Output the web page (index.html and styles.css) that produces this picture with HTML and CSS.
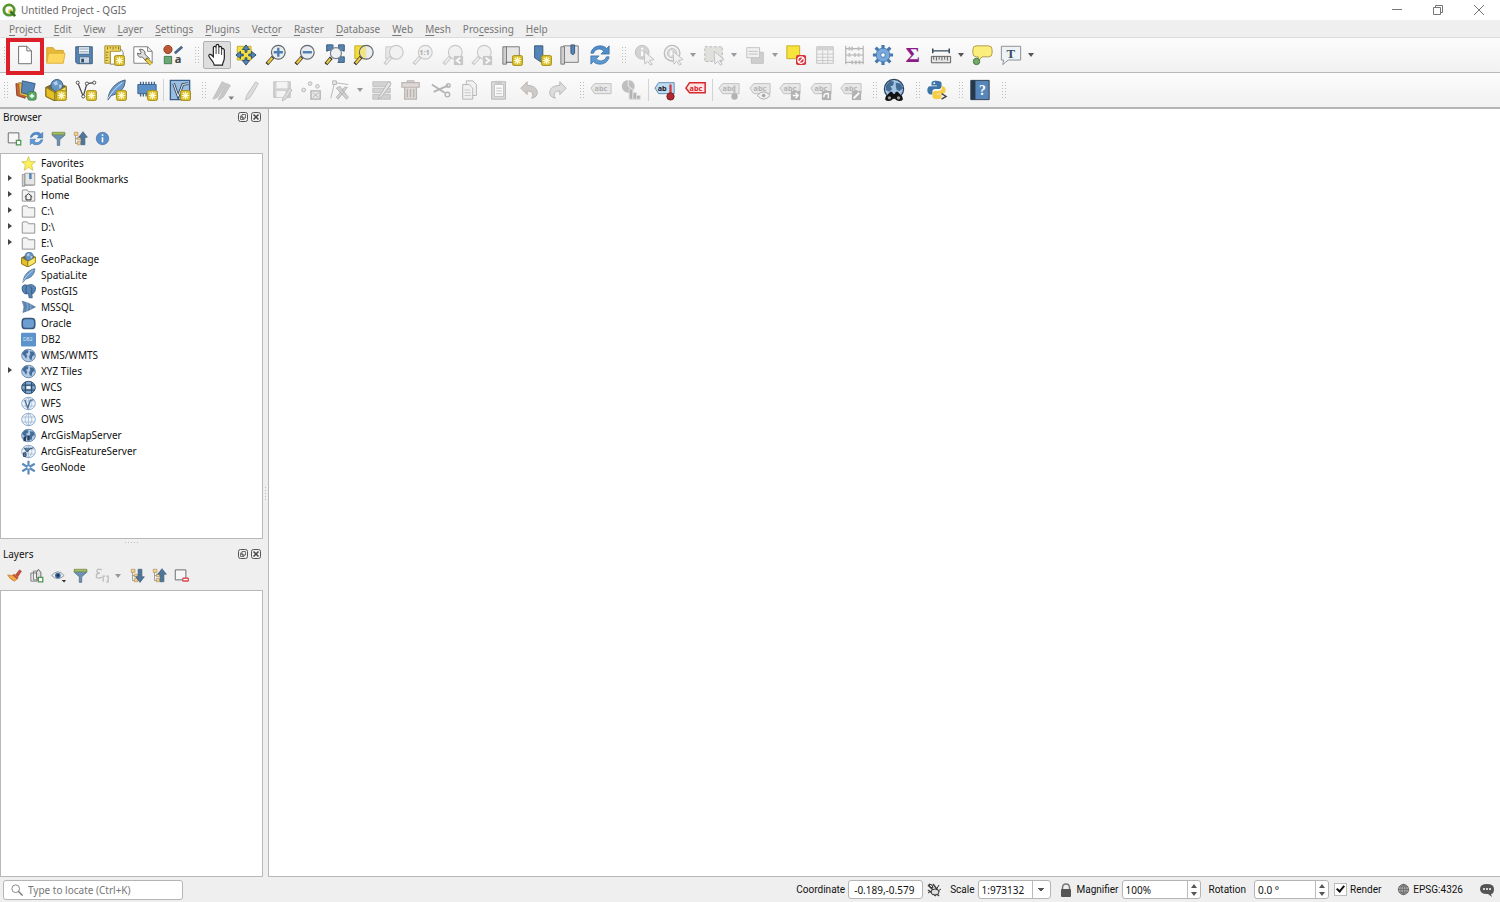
FILE: index.html
```html
<!doctype html>
<html lang="en">
<head>
<meta charset="utf-8">
<title>Untitled Project - QGIS</title>
<link rel="stylesheet" href="styles.css">
</head>

<body>
<!-- shared icons -->
<svg class="sprite" aria-hidden="true">
	<symbol id="star" viewBox="0 0 24 24"><rect x="12.500" y="12.500" width="11" height="11" rx="2" fill="#d9bd2b" stroke="#a58c1b"/><path d="M18 14v8M14 18h8M15 15l6 6M21 15l-6 6" stroke="#fffbd0" stroke-width="1.300"/></symbol>
	<symbol id="lens" viewBox="0 0 24 24"><path d="M2 22l7-8" stroke="#333" stroke-width="4"/><path d="M3 21l5-6" stroke="#f2c93a" stroke-width="2.400"/><circle cx="14.500" cy="9" r="7.500" fill="#e3eaf0" fill-opacity=".8" stroke="#63676b" stroke-width="1.300"/></symbol>
	<symbol id="glens" viewBox="0 0 24 24"><path d="M2 22l7-8" stroke="#aaa" stroke-width="4"/><path d="M3 21l5-6" stroke="#eee" stroke-width="2"/><circle cx="14.500" cy="9" r="7.500" fill="#eee" stroke="#aaa" stroke-width="1.300"/></symbol>
	<symbol id="globe" viewBox="0 0 24 24"><ellipse cx="12" cy="12" rx="11" ry="10" fill="#b3cbe5" stroke="#55799f" stroke-width="1.300"/><path d="M3 7l4-4 5 1-1 4-3 1 2 4-2 4-3-5-3-2zM14 5l6 1 2 5-4 2-1 6-3-1-1-5 2-3z" fill="#436d98"/></symbol>
	<symbol id="grid" viewBox="0 0 24 24"><ellipse cx="12" cy="12" rx="11" ry="10" fill="#eef4fb" stroke="#7e9fc4" stroke-width="1.300"/><path d="M2 8h20M2 16h20M12 2v20M12 2c-7 5-7 15 0 20M12 2c7 5 7 15 0 20" fill="none" stroke="#8eabca"/></symbol>
	<symbol id="refresh" viewBox="0 0 24 24"><path d="M2 10c1-5 5-8 10-8 3 0 6 1 7 3l3-3v9h-9l3-3c-3-4-9-3-11 2z" fill="#4f8cc9" stroke="#386da6" stroke-width=".8"/><path d="M22 14c-1 5-5 8-10 8-3 0-6-1-7-3l-3 3v-9h9l-3 3c3 4 9 3 11-2z" fill="#5d98d1" stroke="#386da6" stroke-width=".8"/></symbol>
	<symbol id="box" viewBox="0 0 24 24"><path d="M1 9l11-5 11 4v9l-12 7L1 19z" fill="#f6dc3d" stroke="#77651b"/><path d="M1 9l10 5 12-6-11-5z" fill="#776a38"/><circle cx="13" cy="7" r="6.500" fill="#6595c5" stroke="#345b83"/><path d="M9 4l4-2 1 4-3 1zM15 6l4 1-3 4z" fill="#b7d0e8"/><path d="M1 9l10 6v9L1 19z" fill="#e5bf23" stroke="#77651b"/><path d="M11 15l12-7v9l-12 7z" fill="#fae765" stroke="#77651b"/></symbol>
	<symbol id="feather" viewBox="0 0 24 24"><path d="M3 23C4 13 10 4 22 1c0 8-4 14-15 17z" fill="#6a9bd0" stroke="#3b5875"/><path d="M2 23C7 15 12 9 19 4" fill="none" stroke="#dbe9f7"/></symbol>
	<symbol id="bookm" viewBox="0 0 24 24"><path d="M6 2h16v19H6z" fill="#e6e6e6" stroke="#777"/><path d="M2 4h4v19H2zM6 21h14" fill="#cfcfcf" stroke="#777"/></symbol>
	<symbol id="folder" viewBox="0 0 24 24"><path d="M2 5l1-2h7l2 3h10v15H2z" fill="#f3f3f3" stroke="#888" stroke-width="1.400"/></symbol>
	<symbol id="filter" viewBox="0 0 24 24"><path d="M2 3h20v4l-8 7v9h-4v-9L2 7z" fill="#6d91b4" stroke="#496884"/><path d="M2 2h20v4H2z" fill="#a8bd60" stroke="#71863b"/></symbol>
	<symbol id="treeup" viewBox="0 0 24 24"><path d="M4 4v16M4 12h6M4 20h6" fill="none" stroke="#777"/><path d="M2 2h6v5H2zM7 10h5v4H7zM7 17h5v5H7z" fill="#efd29a" stroke="#b48b42"/><path d="M16 1l7 9h-4v12h-6V10H9z" fill="#4f7599" stroke="#365775"/></symbol>
	<symbol id="treedown" viewBox="0 0 24 24"><path d="M4 4v16M4 12h6M4 20h6" fill="none" stroke="#777"/><path d="M2 2h6v5H2zM7 10h5v4H7zM7 17h5v5H7z" fill="#efd29a" stroke="#b48b42"/><path d="M16 23l7-9h-4V2h-6v12H9z" fill="#4f7599" stroke="#365775"/></symbol>
	<symbol id="tag" viewBox="0 0 24 24"><path d="M1 10l4-5h18v11H5z" fill="#dedede" stroke="#999"/><text x="5" y="13.500" class="ico-text" fill="#888">abc</text></symbol>
	<symbol id="float" viewBox="0 0 12 12"><rect x="1.500" y="1.500" width="9" height="9" rx="2" fill="none" stroke="#555"/><path d="M5 3.500h3.500V7H5zM3.500 5H5v2h2v1.500H3.500z" fill="none" stroke="#555" stroke-width=".8"/></symbol>
	<symbol id="shut" viewBox="0 0 12 12"><rect x="1.500" y="1.500" width="9" height="9" rx="2" fill="none" stroke="#555"/><path d="M3.500 3.500l5 5M8.500 3.500l-5 5" stroke="#444" stroke-width="1.500"/></symbol>
	<symbol id="cursor" viewBox="0 0 24 24"><path d="M12 8l11 9-5 1 3 4-2 1-3-4-3 3z" fill="#eee" stroke="#999"/></symbol>
</svg>

<header class="titlebar">
	<svg class="logo" viewBox="0 0 16 16"><circle cx="7.500" cy="7.500" r="5.500" fill="none" stroke="#589632" stroke-width="3"/><path d="M8 8l6 6" stroke="#39751e" stroke-width="3"/><path d="M7 7h4l-4 4z" fill="#e8c728"/></svg>
	<h1>Untitled Project - QGIS</h1>
	<div class="win_btns">
		<button aria-label="Minimize"><svg viewBox="0 0 12 12"><path d="M1 5.500h10" stroke="#777"/></svg></button>
		<button aria-label="Restore"><svg viewBox="0 0 12 12"><path d="M1.500 3.500h7v7h-7zM3.500 3.500v-2h7v7h-2" fill="none" stroke="#777"/></svg></button>
		<button aria-label="Close"><svg viewBox="0 0 12 12"><path d="M1 1l10 10M11 1L1 11" stroke="#777"/></svg></button>
	</div>
</header>

<nav class="menubar">
	<button><u>P</u>roject</button>
	<button><u>E</u>dit</button>
	<button><u>V</u>iew</button>
	<button><u>L</u>ayer</button>
	<button><u>S</u>ettings</button>
	<button><u>P</u>lugins</button>
	<button>Vect<u>o</u>r</button>
	<button><u>R</u>aster</button>
	<button><u>D</u>atabase</button>
	<button><u>W</u>eb</button>
	<button><u>M</u>esh</button>
	<button>Pro<u>c</u>essing</button>
	<button><u>H</u>elp</button>
</nav>

<div class="toolrow">
	<i class="grip first"></i>
	<div class="tools project">
		<button class="tool marked" aria-label="New Project"><svg viewBox="0 0 24 24"><path d="M5 2.500h9l5 5v14H5z" fill="#fff" stroke="#666"/><path d="M14 2.500v5h5" fill="none" stroke="#666"/></svg></button>
		<button class="tool" aria-label="Open"><svg viewBox="0 0 24 24"><path d="M3 20V4h7l2 3h9v3" fill="#e9b936" stroke="#cf9e28"/><path d="M3 21l2-11h18l-2 11z" fill="#fdd75c" stroke="#dcae35"/></svg></button>
		<button class="tool" aria-label="Save"><svg viewBox="0 0 24 24"><path d="M3 3h18v18.500H5L3 20z" fill="#5485b7" stroke="#345579"/><path d="M6 3h12v8H6z" fill="#f3f5f7" stroke="#345579" stroke-width=".7"/><path d="M7 5.500h10M7 8.500h10" stroke="#7d99b5"/><path d="M7 14h11v7H7z" fill="#cfd7e0" stroke="#345579" stroke-width=".7"/><path d="M9 16h3v4H9z" fill="#2f4e70"/></svg></button>
		<button class="tool" aria-label="New Print Layout"><svg viewBox="0 0 24 24"><path d="M8 6h12l2 3v13H8z" fill="#fff" stroke="#777"/><path d="M2 2h17v6H8v13H2z" fill="#efd55c" stroke="#a58c35"/><path d="M5 3v3M8 3v2M11 3v3M14 3v2M17 3v3M3 9h3M3 12h2M3 15h3M3 18h2" stroke="#7e6c28"/><use href="#star"/></svg></button>
		<button class="tool" aria-label="Layout Manager"><svg viewBox="0 0 24 24"><path d="M2 3h15l5 5v13H2z" fill="#fff" stroke="#777"/><path d="M17 3v5h5" fill="none" stroke="#777"/><path d="M8 6l2 3-1 2-3-1c0 4 3 5 5 4l5 5 3-3-5-5c1-3-2-6-6-5z" fill="#ddd" stroke="#555"/><path d="M15 16l6 6" stroke="#8c7720" stroke-width="4"/><path d="M16 17l5 5" stroke="#f0d243" stroke-width="2.500"/></svg></button>
		<button class="tool" aria-label="Style Manager"><svg viewBox="0 0 24 24"><circle cx="6.500" cy="6" r="4.500" fill="#bb5936" stroke="#8f3b20"/><path d="M14 10l8-7" stroke="#46678a" stroke-width="3"/><path d="M2.500 13.500h8v8h-8z" fill="#69a875" stroke="#3b7548"/><text x="14" y="21" class="ico-a">a</text></svg></button>
	</div>
	<i class="grip"></i>
	<div class="tools navigate">
		<button class="tool active" aria-label="Pan Map"><svg viewBox="0 0 24 24"><path d="M9 23c-1-5-5-7-6-10 0-2 2-2 3-1l2 2V4c0-2 3-2 3 0V2c0-2 3-2 3 0v2c0-2 3-2 3 0v2c1-2 3-1 3 1v8c0 4-2 5-2 8z" fill="#fff" stroke="#222" stroke-width="1.300"/><path d="M11 4v7M14 4v7M17 6v6" stroke="#333"/></svg></button>
		<button class="tool" aria-label="Pan to Selection"><svg viewBox="0 0 24 24"><path d="M2.500 2.500h15v15h-15z" fill="#f5e03c" stroke="#c0a927"/><path d="M12 1l4 5h-3v3h-2V6H8zM12 23l-4-5h3v-3h2v3h3zM1 12l5-4v3h3v2H6v3zM23 12l-5-4v3h-3v2h3v3z" fill="#5584b5" stroke="#294d72"/></svg></button>
		<button class="tool" aria-label="Zoom In"><svg viewBox="0 0 24 24"><use href="#lens"/><path d="M14.500 4v10M9.500 9h10" stroke="#4d7eaf" stroke-width="2.600"/></svg></button>
		<button class="tool" aria-label="Zoom Out"><svg viewBox="0 0 24 24"><use href="#lens"/><path d="M9.500 9h10" stroke="#4d7eaf" stroke-width="2.600"/></svg></button>
		<button class="tool" aria-label="Zoom Full"><svg viewBox="0 0 24 24"><path d="M3 1h6v5l-2-1-2 2-2 1zM22 1h-6v5l2-1 2 2 2 1zM22 20h-7l2-2-2-3 3-2 2 2 2-1z" fill="#5683b0" stroke="#385d82"/><path d="M3 1h7v6H3zM16 1h6v6h-6zM16 14h6v6h-6z" fill="#5683b0" stroke="#385d82" stroke-width=".7"/><path d="M2 22l6-7" stroke="#333" stroke-width="4"/><path d="M3 21l4-5" stroke="#f2c93a" stroke-width="2.400"/><circle cx="13" cy="10" r="6" fill="#eef1f4" stroke="#7c8186" stroke-width="1.300"/></svg></button>
		<button class="tool" aria-label="Zoom to Selection"><svg viewBox="0 0 24 24"><path d="M2 2h12v14H2z" fill="#f3dd35" stroke="#c4a928"/><use href="#lens"/><path d="M14 3v12c-8-1-8-11 0-12z" fill="#f2e57b"/></svg></button>
		<button class="tool" disabled aria-label="Zoom to Layer"><svg viewBox="0 0 24 24"><path d="M3 3h11v13H3z" fill="#ddd" stroke="#aaa"/><use href="#glens"/></svg></button>
		<button class="tool" disabled aria-label="Zoom to Native Resolution"><svg viewBox="0 0 24 24"><use href="#glens"/><text x="8" y="12.500" class="ico-one">1:1</text></svg></button>
		<button class="tool" disabled aria-label="Zoom Last"><svg viewBox="0 0 24 24"><use href="#glens"/><path d="M13 13h10v10H13z" fill="#aaa"/><path d="M20 15l-4 3 4 3" fill="none" stroke="#fff" stroke-width="2"/></svg></button>
		<button class="tool" disabled aria-label="Zoom Next"><svg viewBox="0 0 24 24"><use href="#glens"/><path d="M13 13h10v10H13z" fill="#aaa"/><path d="M16 15l4 3-4 3" fill="none" stroke="#fff" stroke-width="2"/></svg></button>
		<button class="tool" aria-label="New Map View"><svg viewBox="0 0 24 24"><path d="M5 3h15v17H5z" fill="#e6e6e6" stroke="#777"/><path d="M2 3h4v19H2zM5 20h15" fill="#cfcfcf" stroke="#777"/><use href="#star"/></svg></button>
		<button class="tool" aria-label="New Bookmark"><svg viewBox="0 0 24 24"><path d="M5 2h9v19l-9-6z" fill="#5485b7" stroke="#345579"/><use href="#star"/></svg></button>
		<button class="tool" aria-label="Show Bookmarks"><svg viewBox="0 0 24 24"><path d="M5 2h16v18H5z" fill="#e6e6e6" stroke="#777"/><path d="M2 3h4v19H2z" fill="#cfcfcf" stroke="#777"/><path d="M13 1h4v9l-2 2-2-2z" fill="#5485b7" stroke="#345579"/></svg></button>
		<button class="tool" aria-label="Refresh"><svg viewBox="0 0 24 24"><use href="#refresh"/></svg></button>
	</div>
	<i class="grip"></i>
	<div class="tools attributes">
		<button class="tool" disabled aria-label="Identify"><svg viewBox="0 0 24 24"><circle cx="10" cy="9" r="7.500" fill="#bbb" stroke="#999"/><path d="M10 8v5M10 4v2" stroke="#fff" stroke-width="2.500"/><use href="#cursor"/></svg></button>
		<button class="tool menu" disabled aria-label="Run Action"><svg viewBox="0 0 24 24"><circle cx="11" cy="10" r="8.500" fill="#eee" stroke="#999" stroke-width="1.500"/><circle cx="11" cy="10" r="5" fill="#ccc" stroke="#999"/><path d="M9 7l6 3-6 3z" fill="#fff"/><use href="#cursor"/></svg></button>
		<button class="tool menu" disabled aria-label="Select Features"><svg viewBox="0 0 24 24"><path d="M2 3h19v16H2z" fill="#d2d2cb" stroke="#888" stroke-dasharray="3 2"/><use href="#cursor"/></svg></button>
		<button class="tool menu" disabled aria-label="Select by Value"><svg viewBox="0 0 24 24"><path d="M8 9h13v12H8z" fill="#b7b7b7" stroke="#999"/><path d="M3 4h14v11H3z" fill="#eee" stroke="#999"/><path d="M5 8h10M5 11h10" stroke="#999"/></svg></button>
		<button class="tool" aria-label="Deselect All"><svg viewBox="0 0 24 24"><path d="M2 2h14v14H2z" fill="#f8e23c" stroke="#c7a922"/><rect x="12" y="12" width="11" height="11" rx="2" fill="#d9353a"/><circle cx="17.500" cy="17.500" r="3.500" fill="none" stroke="#fff" stroke-width="1.400"/><path d="M15 20l5-5" stroke="#fff" stroke-width="1.300"/></svg></button>
		<button class="tool" disabled aria-label="Attribute Table"><svg viewBox="0 0 24 24"><path d="M3 3h18v18H3z" fill="#f3f3f3" stroke="#999"/><path d="M3 3h18v4H3z" fill="#bbb"/><path d="M3 11h18M3 14.500h18M3 18h18M9.500 7v14M15 7v14" stroke="#aaa"/></svg></button>
		<button class="tool" disabled aria-label="Field Calculator"><svg viewBox="0 0 24 24"><path d="M3 2v20M22 2v20M3 5h19M3 12h19M3 20h19" stroke="#888" stroke-width="1.300"/><path d="M7 3v4M10 3v4M17 3v4M7 10v4M13 10v4M17 10v4M10 18v4M14 18v4M18 18v4" stroke="#999" stroke-width="2"/></svg></button>
		<button class="tool" aria-label="Toolbox"><svg viewBox="0 0 24 24"><path d="M12 1v22M1 12h22M4 4l16 16M20 4L4 20" stroke="#4779af" stroke-width="3.500"/><circle cx="12" cy="12" r="7.500" fill="#78a9dc" stroke="#4779af"/><circle cx="12" cy="12" r="2.500" fill="#fff" stroke="#4779af"/></svg></button>
		<button class="tool" aria-label="Statistics"><svg viewBox="0 0 24 24"><text x="5" y="20" class="ico-sum">Σ</text></svg></button>
		<button class="tool menu" aria-label="Measure"><svg viewBox="0 0 24 24"><path d="M3 7.500h18M3 5v5M21 5v5" stroke="#34495d" stroke-width="1.600"/><path d="M1.500 13.500h21v7h-21z" fill="#e5e5e5" stroke="#555"/><path d="M4 14v3M7 14v4M10 14v3M13 14v4M16 14v3M19 14v4" stroke="#555"/></svg></button>
		<button class="tool" aria-label="Map Tips"><svg viewBox="0 0 24 24"><path d="M6 2h13q4 0 4 4v4q0 4-4 4h-7l-5 6 1-6H6q-4 0-4-4V6q0-4 4-4z" fill="#fbee7d" stroke="#a9964b"/><circle cx="6" cy="19" r="3.500" fill="#75a86b" stroke="#3f7439"/></svg></button>
		<button class="tool menu" aria-label="Text Annotation"><svg viewBox="0 0 24 24"><path d="M1.500 2.500h21v15H9l-6 5 1-5H1.500z" fill="#eef3f8" stroke="#888"/><text x="7" y="15" class="ico-t">T</text></svg></button>
	</div>
</div>

<div class="toolrow second">
	<i class="grip first"></i>
	<div class="tools manage">
		<button class="tool" aria-label="Data Source Manager"><svg viewBox="0 0 24 24"><path d="M1 5l12 3-2 13-9-3z" fill="#c95c39" stroke="#8e3c26"/><path d="M4 4l13 2-2 14-10-3z" fill="#eab73f" stroke="#9d7424"/><path d="M8 2l14 3-3 13-12-3z" fill="#5686b7" stroke="#365b83"/><rect x="14" y="14" width="9" height="9" rx="2" fill="#5cab68" stroke="#38763f"/><path d="M18.500 16v5M16 18.500h5" stroke="#fff" stroke-width="1.500"/></svg></button>
		<button class="tool" aria-label="New GeoPackage Layer"><svg viewBox="0 0 24 24"><use href="#box"/><use href="#star"/></svg></button>
		<button class="tool" aria-label="New Shapefile Layer"><svg viewBox="0 0 24 24"><path d="M3 4l6 15 4-14 8-1" fill="none" stroke="#444" stroke-width="1.300"/><g fill="#fff" stroke="#444"><circle cx="3" cy="4" r="1.700"/><circle cx="9" cy="19" r="1.700"/><circle cx="13" cy="5" r="1.700"/><circle cx="21" cy="4" r="1.700"/></g><use href="#star"/></svg></button>
		<button class="tool" aria-label="New SpatiaLite Layer"><svg viewBox="0 0 24 24"><use href="#feather"/><use href="#star"/></svg></button>
		<button class="tool" aria-label="New Memory Layer"><svg viewBox="0 0 24 24"><path d="M5 3v16M8 3v16M11 3v16M14 3v16M17 3v16M20 3v16" stroke="#46678a" stroke-width="1.500"/><path d="M2 6h20v10H2z" fill="#5b8fc7" stroke="#385f88"/><use href="#star"/></svg></button>
		<i class="sep"></i>
		<button class="tool" aria-label="New Virtual Layer"><svg viewBox="0 0 24 24"><path d="M1.500 1.500h21v21h-21z" fill="#9bbde0" stroke="#385f88" stroke-width="1.500"/><path d="M5 5l5 14 5-13 6-1" fill="none" stroke="#304a65" stroke-width="3"/><path d="M5 5l5 14 5-13 6-1" fill="none" stroke="#fff"/><use href="#star"/></svg></button>
	</div>
	<i class="grip"></i>
	<div class="tools digitize">
		<button class="tool" disabled aria-label="Current Edits"><svg viewBox="0 0 24 24"><path d="M2 20L11 3l4 2-9 15-5 2zM8 20l8-15 4 2-8 13-5 3z" fill="#aaa" stroke="#999"/><path d="M18 19h6l-3 4z" fill="#333"/></svg></button>
		<button class="tool" disabled aria-label="Toggle Editing"><svg viewBox="0 0 24 24"><path d="M6 18L16 3l3 2-9 15-5 3z" fill="#ccc" stroke="#999"/></svg></button>
		<button class="tool" disabled aria-label="Save Edits"><svg viewBox="0 0 24 24"><path d="M3 3h18v17H3z" fill="#bbb" stroke="#999"/><path d="M6 3h12v7H6zM6 13h10v7H6z" fill="#f2f2f2"/><path d="M13 21l7-11 3 2-7 10-4 2z" fill="#ccc" stroke="#999"/></svg></button>
		<button class="tool" disabled aria-label="Add Feature"><svg viewBox="0 0 24 24"><g fill="#ddd" stroke="#888"><circle cx="4" cy="12" r="2"/><circle cx="11" cy="5" r="2"/><circle cx="19" cy="8" r="2"/></g><path d="M12 13h10v9H12z" fill="#ddd" stroke="#888" stroke-width="1.500"/><path d="M14 15l6 5M20 15l-6 5" stroke="#888"/></svg></button>
		<button class="tool menu" disabled aria-label="Vertex Tool"><svg viewBox="0 0 24 24"><path d="M2 21L6 4l15 2" fill="none" stroke="#888"/><path d="M4 2h4v4H4z" fill="#ddd" stroke="#888"/><path d="M8 10l4-2 9 12-2 2zM20 9L10 22l-2-2 9-11z" fill="#bbb" stroke="#888"/></svg></button>
		<button class="tool" disabled aria-label="Modify Attributes"><svg viewBox="0 0 24 24"><path d="M2 3h19v5H2zM2 10h19v5H2zM2 17h19v5H2z" fill="#bbb" stroke="#999"/><path d="M9 19L19 3l3 2-10 14-4 3z" fill="#ddd" stroke="#888"/></svg></button>
		<button class="tool" disabled aria-label="Delete Selected"><svg viewBox="0 0 24 24"><path d="M2 4h19v5H2zM8 2h7v2H8zM5 9h13v13H5z" fill="#cfc6c1" stroke="#958d89" stroke-width="1.300"/><path d="M8 11v9M11.500 11v9M15 11v9" stroke="#8e8783" stroke-width="1.500"/></svg></button>
		<button class="tool" disabled aria-label="Cut"><svg viewBox="0 0 24 24"><path d="M2 6l14 9M4 14l16-7" stroke="#888" stroke-width="2"/><circle cx="19" cy="17" r="2.500" fill="none" stroke="#888" stroke-width="1.500"/><circle cx="20" cy="7" r="2" fill="none" stroke="#888" stroke-width="1.500"/></svg></button>
		<button class="tool" disabled aria-label="Copy"><svg viewBox="0 0 24 24"><path d="M8 2h7l4 4v12H8z" fill="#eee" stroke="#888"/><path d="M4 6h7l4 4v12H4z" fill="#eee" stroke="#888"/><path d="M6 12h6M6 15h7M6 18h7" stroke="#aaa"/></svg></button>
		<button class="tool" disabled aria-label="Paste"><svg viewBox="0 0 24 24"><path d="M4 3h15v19H4z" fill="#ccc" stroke="#888"/><path d="M7 6h10v13H7z" fill="#fff" stroke="#999"/><path d="M8 2h7v4H8z" fill="#aaa"/><path d="M9 10h6M9 13h6M9 16h6" stroke="#999"/></svg></button>
		<button class="tool" disabled aria-label="Undo"><svg viewBox="0 0 24 24"><path d="M3 10l7-7v4c7 0 11 3 11 8 0 3-2 5-6 6 3-5 0-8-5-8v4z" fill="#b5aeab" stroke="#8c8582"/></svg></button>
		<button class="tool" disabled aria-label="Redo"><svg viewBox="0 0 24 24"><path d="M21 10l-7-7v4C7 7 3 10 3 15c0 3 2 5 6 6-3-5 0-8 5-8v4z" fill="#ccc" stroke="#8c8582"/></svg></button>
	</div>
	<i class="grip"></i>
	<div class="tools labels">
		<button class="tool" disabled aria-label="Layer Labeling"><svg viewBox="0 0 24 24"><use href="#tag"/></svg></button>
		<button class="tool" disabled aria-label="Layer Diagram"><svg viewBox="0 0 24 24"><circle cx="9" cy="8" r="7" fill="#999"/><path d="M9 8V1M9 8l6 4" stroke="#eee"/><path d="M10 11h4v11h-4zM14 15h4v7h-4zM18 18h4v4h-4z" fill="#888" stroke="#ccc"/></svg></button>
		<i class="sep"></i>
		<button class="tool" aria-label="Highlight Pinned Labels"><svg viewBox="0 0 24 24"><path d="M1 10l4-6h17v12H5z" fill="#bcdcf4" stroke="#5b83aa"/><text x="4" y="13.500" class="ico-text" fill="#222">ab</text><path d="M18 6v11" stroke="#d03b40" stroke-width="2.500"/><circle cx="18" cy="19" r="4" fill="#b12930" stroke="#781a1e"/></svg></button>
		<button class="tool" aria-label="Toggle Unplaced Labels"><svg viewBox="0 0 24 24"><path d="M1 10l4-6h17v11H5z" fill="#ffe4e2" stroke="#d7262e" stroke-width="1.600"/><text x="5" y="13" class="ico-text" fill="#d7262e">abc</text></svg></button>
		<i class="sep"></i>
		<button class="tool" disabled aria-label="Pin Labels"><svg viewBox="0 0 24 24"><use href="#tag"/><path d="M18 7v9" stroke="#999" stroke-width="2"/><circle cx="18" cy="19" r="3.500" fill="#888"/></svg></button>
		<button class="tool" disabled aria-label="Show Labels"><svg viewBox="0 0 24 24"><use href="#tag"/><path d="M9 18q7-8 14 0q-7 8-14 0z" fill="#eee" stroke="#777"/><circle cx="16" cy="18" r="2" fill="#777"/></svg></button>
		<button class="tool" disabled aria-label="Move Label"><svg viewBox="0 0 24 24"><use href="#tag"/><path d="M13 13h10v10H13z" fill="#888"/><path d="M15 18h6M18 15l3 3-3 3" fill="none" stroke="#fff" stroke-width="1.500"/></svg></button>
		<button class="tool" disabled aria-label="Rotate Label"><svg viewBox="0 0 24 24"><use href="#tag"/><path d="M13 13h10v10H13z" fill="#888"/><path d="M15 20q0-5 5-4v5" fill="none" stroke="#fff" stroke-width="1.500"/></svg></button>
		<button class="tool" disabled aria-label="Change Label"><svg viewBox="0 0 24 24"><use href="#tag"/><path d="M13 13h10v10H13z" fill="#888"/><path d="M15 21l6-6" stroke="#fff" stroke-width="2"/></svg></button>
	</div>
	<i class="grip"></i>
	<div class="tools">
		<button class="tool" aria-label="MetaSearch"><svg viewBox="0 0 24 24"><circle cx="12" cy="11" r="10.500" fill="#a3c3e3" stroke="#29425d" stroke-width="1.300"/><path d="M3 7l5-5 4 1-1 4-3 1 2 3-3 3-4-2zM14 4l5 1 3 5-4 3-3-1-1-4z" fill="#426a93"/><path d="M3 19l5-5h2l1 2h2l1-2h2l5 5q2 5-3 5-4 0-5-3h-2q-1 3-5 3-5 0-3-5z" fill="#111"/><circle cx="7" cy="20.500" r="1.800" fill="#999"/><circle cx="17" cy="20.500" r="1.800" fill="#999"/></svg></button>
	</div>
	<i class="grip"></i>
	<div class="tools">
		<button class="tool" aria-label="Python Console"><svg viewBox="0 0 24 24"><path d="M11 2c-5 0-5 1-5 5h6v1H4c-4 1-3 9 1 9h2v-3q0-3 3-3h5q2-1 2-3V5c0-2-2-3-6-3z" fill="#3d75a9"/><circle cx="9" cy="4.500" r="1" fill="#fff"/><path d="M12 22c5 0 5-1 5-5h-5v-1h7c4-1 3-8-1-8h-1v3q0 2-3 2H9q-2 1-2 3v3c0 2 2 3 5 3z" fill="#f7cd45"/><path d="M17 16l5 3-5 3" fill="none" stroke="#444" stroke-width="1.500"/></svg></button>
	</div>
	<i class="grip"></i>
	<div class="tools">
		<button class="tool" aria-label="Help Contents"><svg viewBox="0 0 24 24"><path d="M2 1.500h20v21H2z" fill="#5787ba" stroke="#29384a"/><path d="M2 1.500h5v21H2z" fill="#26384c"/><text x="11" y="17" class="ico-q">?</text></svg></button>
	</div>
	<i class="grip"></i>
</div>

<main class="workspace">
	<aside class="dock">
		<section class="panel browser">
			<div class="panel_head"><h2>Browser</h2><button aria-label="Float Browser"><svg><use href="#float"/></svg></button><button aria-label="Close Browser"><svg><use href="#shut"/></svg></button></div>
			<div class="panel_tools">
				<button aria-label="Add Selected Layers"><svg viewBox="0 0 24 24"><path d="M2 3h17v16H2z" fill="#f7f7f7" stroke="#666" stroke-width="1.500"/><path d="M15 15h7v7h-7z" fill="#fff" stroke="#4b9650" stroke-width="2"/></svg></button>
				<button aria-label="Refresh"><svg><use href="#refresh"/></svg></button>
				<button aria-label="Filter Browser"><svg><use href="#filter"/></svg></button>
				<button aria-label="Collapse All"><svg><use href="#treeup"/></svg></button>
				<button aria-label="Properties"><svg viewBox="0 0 24 24"><circle cx="12" cy="12" r="10" fill="#5b8fc9" stroke="#3c6b9e"/><path d="M12 10v8M12 5v3" stroke="#fff" stroke-width="2.500"/></svg></button>
			</div>
			<ul class="tree">
				<li><svg viewBox="0 0 24 24"><path d="M12 1l3 8h8l-6 5 2 9-7-5-7 5 2-9-6-5h8z" fill="#fbf15c" stroke="#c5b235"/></svg>Favorites</li>
				<li class="parent"><svg viewBox="0 0 24 24"><use href="#bookm"/><path d="M13 2h4v8l-2 2-2-2z" fill="#5485b7"/></svg>Spatial Bookmarks</li>
				<li class="parent"><svg viewBox="0 0 24 24"><use href="#folder"/><path d="M6 14l6-5 6 5M8 13v6h8v-6" fill="none" stroke="#333" stroke-width="1.600"/></svg>Home</li>
				<li class="parent"><svg><use href="#folder"/></svg>C:\</li>
				<li class="parent"><svg><use href="#folder"/></svg>D:\</li>
				<li class="parent"><svg><use href="#folder"/></svg>E:\</li>
				<li><svg><use href="#box"/></svg>GeoPackage</li>
				<li><svg><use href="#feather"/></svg>SpatiaLite</li>
				<li><svg viewBox="0 0 24 24"><path d="M2 4q3-4 8-2 10-3 13 3c1 5-2 10-5 11l-1-2 1 8h-5l-1-7-4 1C3 15 1 10 2 4z" fill="#5687b8" stroke="#2e5277" stroke-width="1.300"/><path d="M9 3q-3 6 0 12M15 4q4 3 2 10" fill="none" stroke="#2e5277" stroke-width="1.400"/></svg>PostGIS</li>
				<li><svg viewBox="0 0 24 24"><path d="M2 2q10 2 21 9-8 5-20 9 4-9-1-18z" fill="#5b87b3" stroke="#48698c"/><path d="M9 4q4 7 0 14M15 7q2 4 0 8" fill="none" stroke="#a9c4df"/></svg>MSSQL</li>
				<li><svg viewBox="0 0 24 24"><rect x="2" y="4" width="20" height="16" rx="5" fill="#6d9ed2" stroke="#3a5879" stroke-width="2.500"/></svg>Oracle</li>
				<li><svg viewBox="0 0 24 24"><rect x="0" y="1" width="24" height="22" rx="2" fill="#5c93cc"/><text x="3" y="15" class="ico-db">DB2</text></svg>DB2</li>
				<li><svg><use href="#globe"/></svg>WMS/WMTS</li>
				<li class="parent"><svg><use href="#globe"/></svg>XYZ Tiles</li>
				<li><svg viewBox="0 0 24 24"><ellipse cx="12" cy="12" rx="11" ry="10" fill="#7fa8d3" stroke="#31506f" stroke-width="1.500"/><path d="M2 8h20M2 16h20M7 3v18M17 3v18" stroke="#31506f" stroke-width="2"/><path d="M9 10h6v4H9z" fill="#fff"/></svg>WCS</li>
				<li><svg viewBox="0 0 24 24"><use href="#grid"/><path d="M6 6l5 13 4-12 5-1" fill="none" stroke="#446b94" stroke-width="2"/></svg>WFS</li>
				<li><svg><use href="#grid"/></svg>OWS</li>
				<li><svg viewBox="0 0 24 24"><use href="#globe"/><path d="M4 14h4v7H4zM10 12h4v8h-4z" fill="#263f59"/></svg>ArcGisMapServer</li>
				<li><svg viewBox="0 0 24 24"><use href="#grid"/><path d="M5 6l5 7 4-5 6-2M4 14h4v6H4z" fill="#5c7e9f" stroke="#334d67" stroke-width="1.500"/></svg>ArcGisFeatureServer</li>
				<li><svg viewBox="0 0 24 24"><path d="M12 1v22M2 6l20 12M22 6L2 18" stroke="#5d8bb9" stroke-width="3.500"/><circle cx="12" cy="12" r="2" fill="#fff"/></svg>GeoNode</li>
			</ul>
		</section>
		<div class="split"></div>
		<section class="panel layers">
			<div class="panel_head"><h2>Layers</h2><button aria-label="Float Layers"><svg><use href="#float"/></svg></button><button aria-label="Close Layers"><svg><use href="#shut"/></svg></button></div>
			<div class="panel_tools">
				<button aria-label="Layer Styling"><svg viewBox="0 0 24 24"><path d="M12 13l8-10 3 2-7 11z" fill="#c4523a" stroke="#9b3c2a"/><path d="M1 11l6 1 5-2 6 6-6 5q-7-2-11-10z" fill="#f1aa48" stroke="#be732d"/><path d="M11 10l7 6-2 2-7-6z" fill="#c4523a"/></svg></button>
				<button aria-label="Add Group"><svg viewBox="0 0 24 24"><path d="M3 8h10v13H3zM7 5h10v14H7z" fill="#eee" stroke="#777" stroke-width="1.500"/><path d="M12 16V7l3-5 4 5v9z" fill="#ddd" stroke="#666" stroke-width="1.500"/><path d="M15 15h7v7h-7z" fill="#fff" stroke="#4b9650" stroke-width="2"/></svg></button>
				<button aria-label="Map Themes"><svg viewBox="0 0 24 24"><path d="M1 12Q11 0 21 12 11 22 1 12z" fill="#e7edf3" stroke="#8a96a2" stroke-width="1.500"/><circle cx="11" cy="12" r="4.500" fill="#426b98"/><circle cx="11" cy="12" r="2" fill="#182c43"/><path d="M17 19h7l-3 4z" fill="#333"/></svg></button>
				<button aria-label="Filter Legend"><svg><use href="#filter"/></svg></button>
				<button class="menu" disabled aria-label="Filter by Expression"><svg viewBox="0 0 24 24"><path d="M11 3Q3 0 3 5q0 3 5 3-6 0-6 5 0 5 9 2" fill="none" stroke="#888" stroke-width="2"/><path d="M13 22v-9h3M18 13h3v9h-3" fill="none" stroke="#888" stroke-width="2"/></svg></button>
				<button aria-label="Expand All"><svg><use href="#treedown"/></svg></button>
				<button aria-label="Collapse All"><svg><use href="#treeup"/></svg></button>
				<button aria-label="Remove Layer"><svg viewBox="0 0 24 24"><path d="M2 3h17v16H2z" fill="#f7f7f7" stroke="#666" stroke-width="1.500"/><rect x="13" y="15" width="11" height="7" rx="2" fill="#dc4b52"/><path d="M15 18.500h7" stroke="#fff" stroke-width="2"/></svg></button>
			</div>
			<div class="layer_list"></div>
		</section>
	</aside>
	<div class="vsplit"></div>
	<div class="canvas"></div>
</main>

<footer class="statusbar">
	<label class="locate"><svg viewBox="0 0 14 14"><circle cx="5.500" cy="5.500" r="4.500" fill="none" stroke="#777"/><path d="M8.500 8.500l5 5" stroke="#777" stroke-width="1.500"/></svg><input type="text" placeholder="Type to locate (Ctrl+K)" aria-label="Locate"></label>
	<div class="status_items">
		<label for="coord">Coordinate</label>
		<input class="field coord" id="coord" type="text" value="-0.189,-0.579">
		<button class="extents" aria-label="Toggle Extents"><svg viewBox="0 0 16 16"><path d="M2 3l11 11M7 2l6 8M2 8l8 6" stroke="#444" stroke-width="1.500"/><path d="M3 2l3 1 1 3-3-1zM10 8l3-5M12 9l3-2M2 11l3-2" fill="none" stroke="#333"/><ellipse cx="9" cy="10" rx="4" ry="3" fill="#ddd" stroke="#333"/></svg></button>
		<label for="scale">Scale</label>
		<select class="field scale" id="scale"><option>1:973132</option></select>
		<button class="lock" aria-label="Lock Scale"><svg viewBox="0 0 14 16"><path d="M3.500 8V6q0-4 3.500-4t3.500 4v2" fill="none" stroke="#777" stroke-width="1.500"/><rect x="2" y="7" width="10" height="8" rx="1" fill="#555"/></svg></button>
		<label for="magnifier">Magnifier</label>
		<span class="spin magnifier"><input id="magnifier" type="text" value="100%"><span class="steps"><button aria-label="Magnifier up"></button><button class="down" aria-label="Magnifier down"></button></span></span>
		<label for="rotation" class="rot_label">Rotation</label>
		<span class="spin rotation"><input id="rotation" type="text" value="0.0 °"><span class="steps"><button aria-label="Rotation up"></button><button class="down" aria-label="Rotation down"></button></span></span>
		<label class="render"><input type="checkbox" checked>Render</label>
		<button class="crs"><svg viewBox="0 0 14 14"><circle cx="7" cy="7" r="5.500" fill="#aaa" stroke="#666"/><path d="M1 7h12M7 1v12M2 4h10M2 10h10M7 1q-6 6 0 12M7 1q6 6 0 12" fill="none" stroke="#666" stroke-width=".8"/></svg>EPSG:4326</button>
		<button class="messages" aria-label="Messages"><svg viewBox="0 0 16 16"><path d="M8 2q7 0 7 5t-3 5l1 3-4-3H8q-7 0-7-5t7-5z" fill="#555"/><path d="M4 7h2M7 7h2M10 7h2" stroke="#fff" stroke-width="1.500"/></svg></button>
	</div>
</footer>
</body>
</html>
```
FILE: styles.css
```css
*,*::before,*::after{margin:0; padding:0; box-sizing:border-box;}
body{min-height:100vh; display:flex; flex-direction:column; background:#efefef; color:#111; font:10px/16px "Noto Sans","Open Sans",sans-serif;}
button{border:0; background:none; font:inherit; color:inherit;}
input,select{font:inherit; color:inherit;}
svg{display:block;}
ul{list-style:none;}
.sprite{display:none;}

.titlebar{height:20px; display:flex; align-items:center; background:#fff; padding-left:2px;}
.titlebar h1{font-size:10px; font-weight:400; color:#666; margin-left:4px;}
.logo{width:15px; height:15px;}
.win_btns{margin:0 1px 0 auto; display:flex;}
.win_btns button{width:41px; height:20px; display:flex; align-items:center; justify-content:center;}
.win_btns svg{width:12px; height:12px;}

.menubar{height:18px; display:flex; align-items:center; gap:12px; padding:1px 0 0 9px; color:#777; border-bottom:1px solid #dcdcdc;}
.menubar u{text-underline-offset:2px;}

.toolrow{height:35px; display:flex; align-items:center; background:linear-gradient(#fcfcfc,#f1f1f1); border-bottom:1px solid #b9b9b9;}
.second{height:36px; border-bottom:2px solid #b4b4b4;}
.grip{width:16px; height:18px; background:radial-gradient(circle,#bbb 1px,transparent 1px) 0 0/3px 3px content-box; padding:0 3px 0 7px; background-clip:content-box;}
.grip.first{width:11px; padding:0 2px 0 3px;}
.second .grip{width:15px;}
.second .first{width:12px;}
.tools{display:flex; align-items:center; justify-content:space-between;}
.project{width:176px;}
.navigate{width:411px;}
.attributes{width:407px;}
.manage{width:182px;}
.digitize{width:363px;}
.labels{width:278px;}
.tool{width:28px; height:28px; display:flex; align-items:center; justify-content:center; position:relative; flex:none;}
.tool svg{width:22px; height:22px; overflow:visible;}
.tool:disabled svg{opacity:.6;}
.tool.active{background:#dedede; border:1px solid #b0b0b0; border-radius:2px;}
.tool.menu{width:40px; padding-right:12px;}
.menu::after{content:""; position:absolute; right:3px; top:12px; border:3px solid transparent; border-top:4px solid #555; border-bottom:0;}
.menu:disabled::after{border-top-color:#999;}
.marked::after{content:""; position:absolute; left:-5px; top:-3px; width:38px; height:37px; border:4px solid #dc1f28; z-index:2;}
.sep{width:1px; height:22px; background:#d3d3d3;}

.ico-text{font:bold 8px "Noto Sans",sans-serif;}
.ico-one{font:bold 8px "Noto Sans",sans-serif; fill:#777;}
.ico-a{font:bold 12px "Noto Sans",sans-serif; fill:#444;}
.ico-sum{font:bold 24px "Liberation Serif",serif; fill:#8c1a88;}
.ico-t{font:bold 14px "Liberation Serif",serif; fill:#334a60;}
.ico-q{font:bold 15px "Liberation Serif",serif; fill:#fff;}
.ico-db{font:8px "Noto Sans",sans-serif; fill:#d3e4f5;}

.workspace{flex:1; display:flex;}
.dock{width:263px; display:flex; flex-direction:column; flex:none;}
.panel{display:flex; flex-direction:column;}
.browser{flex:430 1 0;}
.layers{flex:331 1 0;}
.panel_head{height:16px; display:flex; align-items:center; padding-left:3px;}
.panel_head h2{font-size:10px; font-weight:400; margin-right:auto;}
.panel_head button{width:13px; height:13px;}
.panel_head svg{width:12px; height:12px;}
.panel_tools{height:28px; display:flex; align-items:center; gap:6px; padding:0 0 2px 7px;}
.panel_tools button{width:16px; height:16px; position:relative;}
.panel_tools svg{width:15px; height:15px;}
.panel_tools .menu{width:29px;}
.panel_tools .menu:disabled svg{opacity:.5;}
.panel_tools .menu::after{right:3px; top:7px;}
.tree,.layer_list{flex:1; background:#fff; border:1px solid #b8b8b8;}
.tree{padding-top:1px;}
.tree li{height:16px; display:flex; align-items:center; gap:5px; padding-left:20px; position:relative; white-space:nowrap;}
.tree li svg{width:15px; height:15px; flex:none;}
.parent::before{content:""; position:absolute; left:7px; top:4px; border:3px solid transparent; border-left:4px solid #444; border-right:0;}
.split{width:15px; height:7px; align-self:center; background:radial-gradient(circle,#bbb 1px,transparent 1px) center/3px 3px repeat-x;}
.vsplit{width:5px; height:15px; align-self:center; background:radial-gradient(circle,#bbb 1px,transparent 1px) center/3px 3px repeat-y;}
.canvas{flex:1; background:#fff; border:1px solid #b8b8b8; border-width:0 0 1px 1px;}

.statusbar{height:25px; display:flex; align-items:center; padding:0 5px 0 3px;}
.locate{width:180px; height:20px; display:flex; align-items:center; gap:5px; padding:0 7px; background:#fff; border:1px solid #b5b5b5; border-radius:3px;}
.locate svg{width:12px; height:12px; flex:none;}
.locate input{border:0; outline:0; width:100%; background:none;}
.locate input::placeholder{color:#777;}
.status_items{margin-left:auto; display:flex; align-items:center; font-family:Roboto,sans-serif;}
.field,.spin{height:19px; background-color:#fff; border:1px solid #b5b5b5; border-radius:3px; font-family:"Noto Sans",sans-serif;}
.coord{width:75px; padding-left:5px; margin-left:3px;}
.extents{width:16px; margin:0 8px 0 3px;}
.scale{width:73px; margin-left:3px; padding-left:3px; appearance:none; background-image:linear-gradient(#bbb,#bbb),linear-gradient(to bottom left,#555 50%,transparent 50%),linear-gradient(to bottom right,#555 50%,transparent 50%); background-repeat:no-repeat; background-position:right 17px top,right 9px center,right 5px center; background-size:1px 100%,4px 4px,4px 4px;}
.lock{width:14px; margin:0 4px 0 8px;}
.spin{display:flex;}
.spin input{border:0; background:none; flex:1; min-width:0; padding-left:3px;}
.magnifier{width:79px; margin-left:3px;}
.rot_label{margin-left:8px;}
.rotation{width:75px; margin-left:8px;}
.steps{width:13px; border-left:1px solid #bbb; display:flex; flex-direction:column; align-items:center; justify-content:center; gap:4px;}
.steps button{border:3px solid transparent; border-bottom:4px solid #555; border-top:0; width:6px; height:4px;}
.steps .down{border-bottom:0; border-top:4px solid #555;}
.render{display:flex; align-items:center; gap:3px; margin-left:5px;}
.render input{width:13px; height:13px; appearance:none; background:#fff; border:1px solid #bbb;}
.render input:checked::before{content:""; display:block; width:5px; height:8px; margin:0 0 0 3px; border:solid #111; border-width:0 2px 2px 0; transform:rotate(40deg);}
.crs{display:flex; align-items:center; gap:3px; margin-left:16px;}
.crs svg{width:13px; height:13px;}
.messages{width:16px; margin-left:16px;}
```
